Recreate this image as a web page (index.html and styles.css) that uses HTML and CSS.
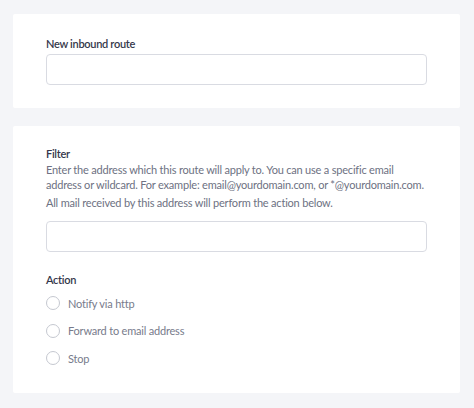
FILE: index.html
```html
<!DOCTYPE html>
<html>
<head>
<meta charset="utf-8">
<link rel="stylesheet" href="styles.css">
</head>
<body>
<div class="page">
  <section class="card card-name">
    <label class="label">New inbound route</label>
    <input class="input" type="text">
  </section>
  <section class="card card-filter">
    <div class="label">Filter</div>
    <p class="desc">Enter the address which this route will apply to. You can use a specific email address or wildcard. For example: email@yourdomain.com, or *@yourdomain.com.</p>
    <p class="desc desc-second">All mail received by this address will perform the action below.</p>
    <input class="input input-filter" type="text">
    <div class="label label-action">Action</div>
    <div class="radios">
      <label class="radio"><span class="circle"></span><span class="radio-text">Notify via http</span></label>
      <label class="radio"><span class="circle"></span><span class="radio-text">Forward to email address</span></label>
      <label class="radio"><span class="circle"></span><span class="radio-text">Stop</span></label>
    </div>
  </section>
</div>
</body>
</html>
```
FILE: styles.css
```css
html, body {
  margin: 0;
  padding: 0;
  background: #f4f5f8;
}
body {
  font-family: Lato, "Noto Sans", sans-serif;
  font-size: 11px;
  color: #2e3142;
}
.page {
  padding: 14px 14px 14px 13px;
  display: flex;
  flex-direction: column;
  gap: 18px;
}
.card {
  background: #ffffff;
  border-radius: 2px;
  display: flex;
  flex-direction: column;
}
.card-name {
  padding: 22px 33px 23px;
}
.card-filter {
  padding: 20px 33px 25px;
}
.label {
  display: block;
  font-weight: 600;
  font-size: 11px;
  line-height: 16px;
  letter-spacing: -0.3px;
  color: #34374a;
  margin-bottom: 2px;
}
.card-filter > .label:first-child {
  line-height: 15px;
  margin-bottom: 1px;
}
.desc {
  margin: 0;
  font-size: 11px;
  line-height: 15px;
  letter-spacing: -0.2px;
  color: #6d7182;
}
.desc-second {
  margin-top: 3px;
}
.input {
  box-sizing: border-box;
  height: 31px;
  width: 100%;
  margin: 0;
  border: 1px solid #d9dbe2;
  border-radius: 4px;
  background: #fff;
  font: inherit;
}
.input-filter {
  margin-top: 11px;
}
.label-action {
  margin-top: 20px;
  margin-bottom: 5px;
}
.radios {
  display: flex;
  flex-direction: column;
  gap: 7.7px;
}
.radio {
  display: flex;
  align-items: center;
  height: 20px;
  gap: 8px;
  color: #777b8b;
  font-size: 11px;
  letter-spacing: -0.2px;
}
.circle {
  box-sizing: border-box;
  width: 14px;
  height: 14px;
  border: 1px solid #c5c8d0;
  border-radius: 50%;
  background: #fff;
  flex: none;
}
```
